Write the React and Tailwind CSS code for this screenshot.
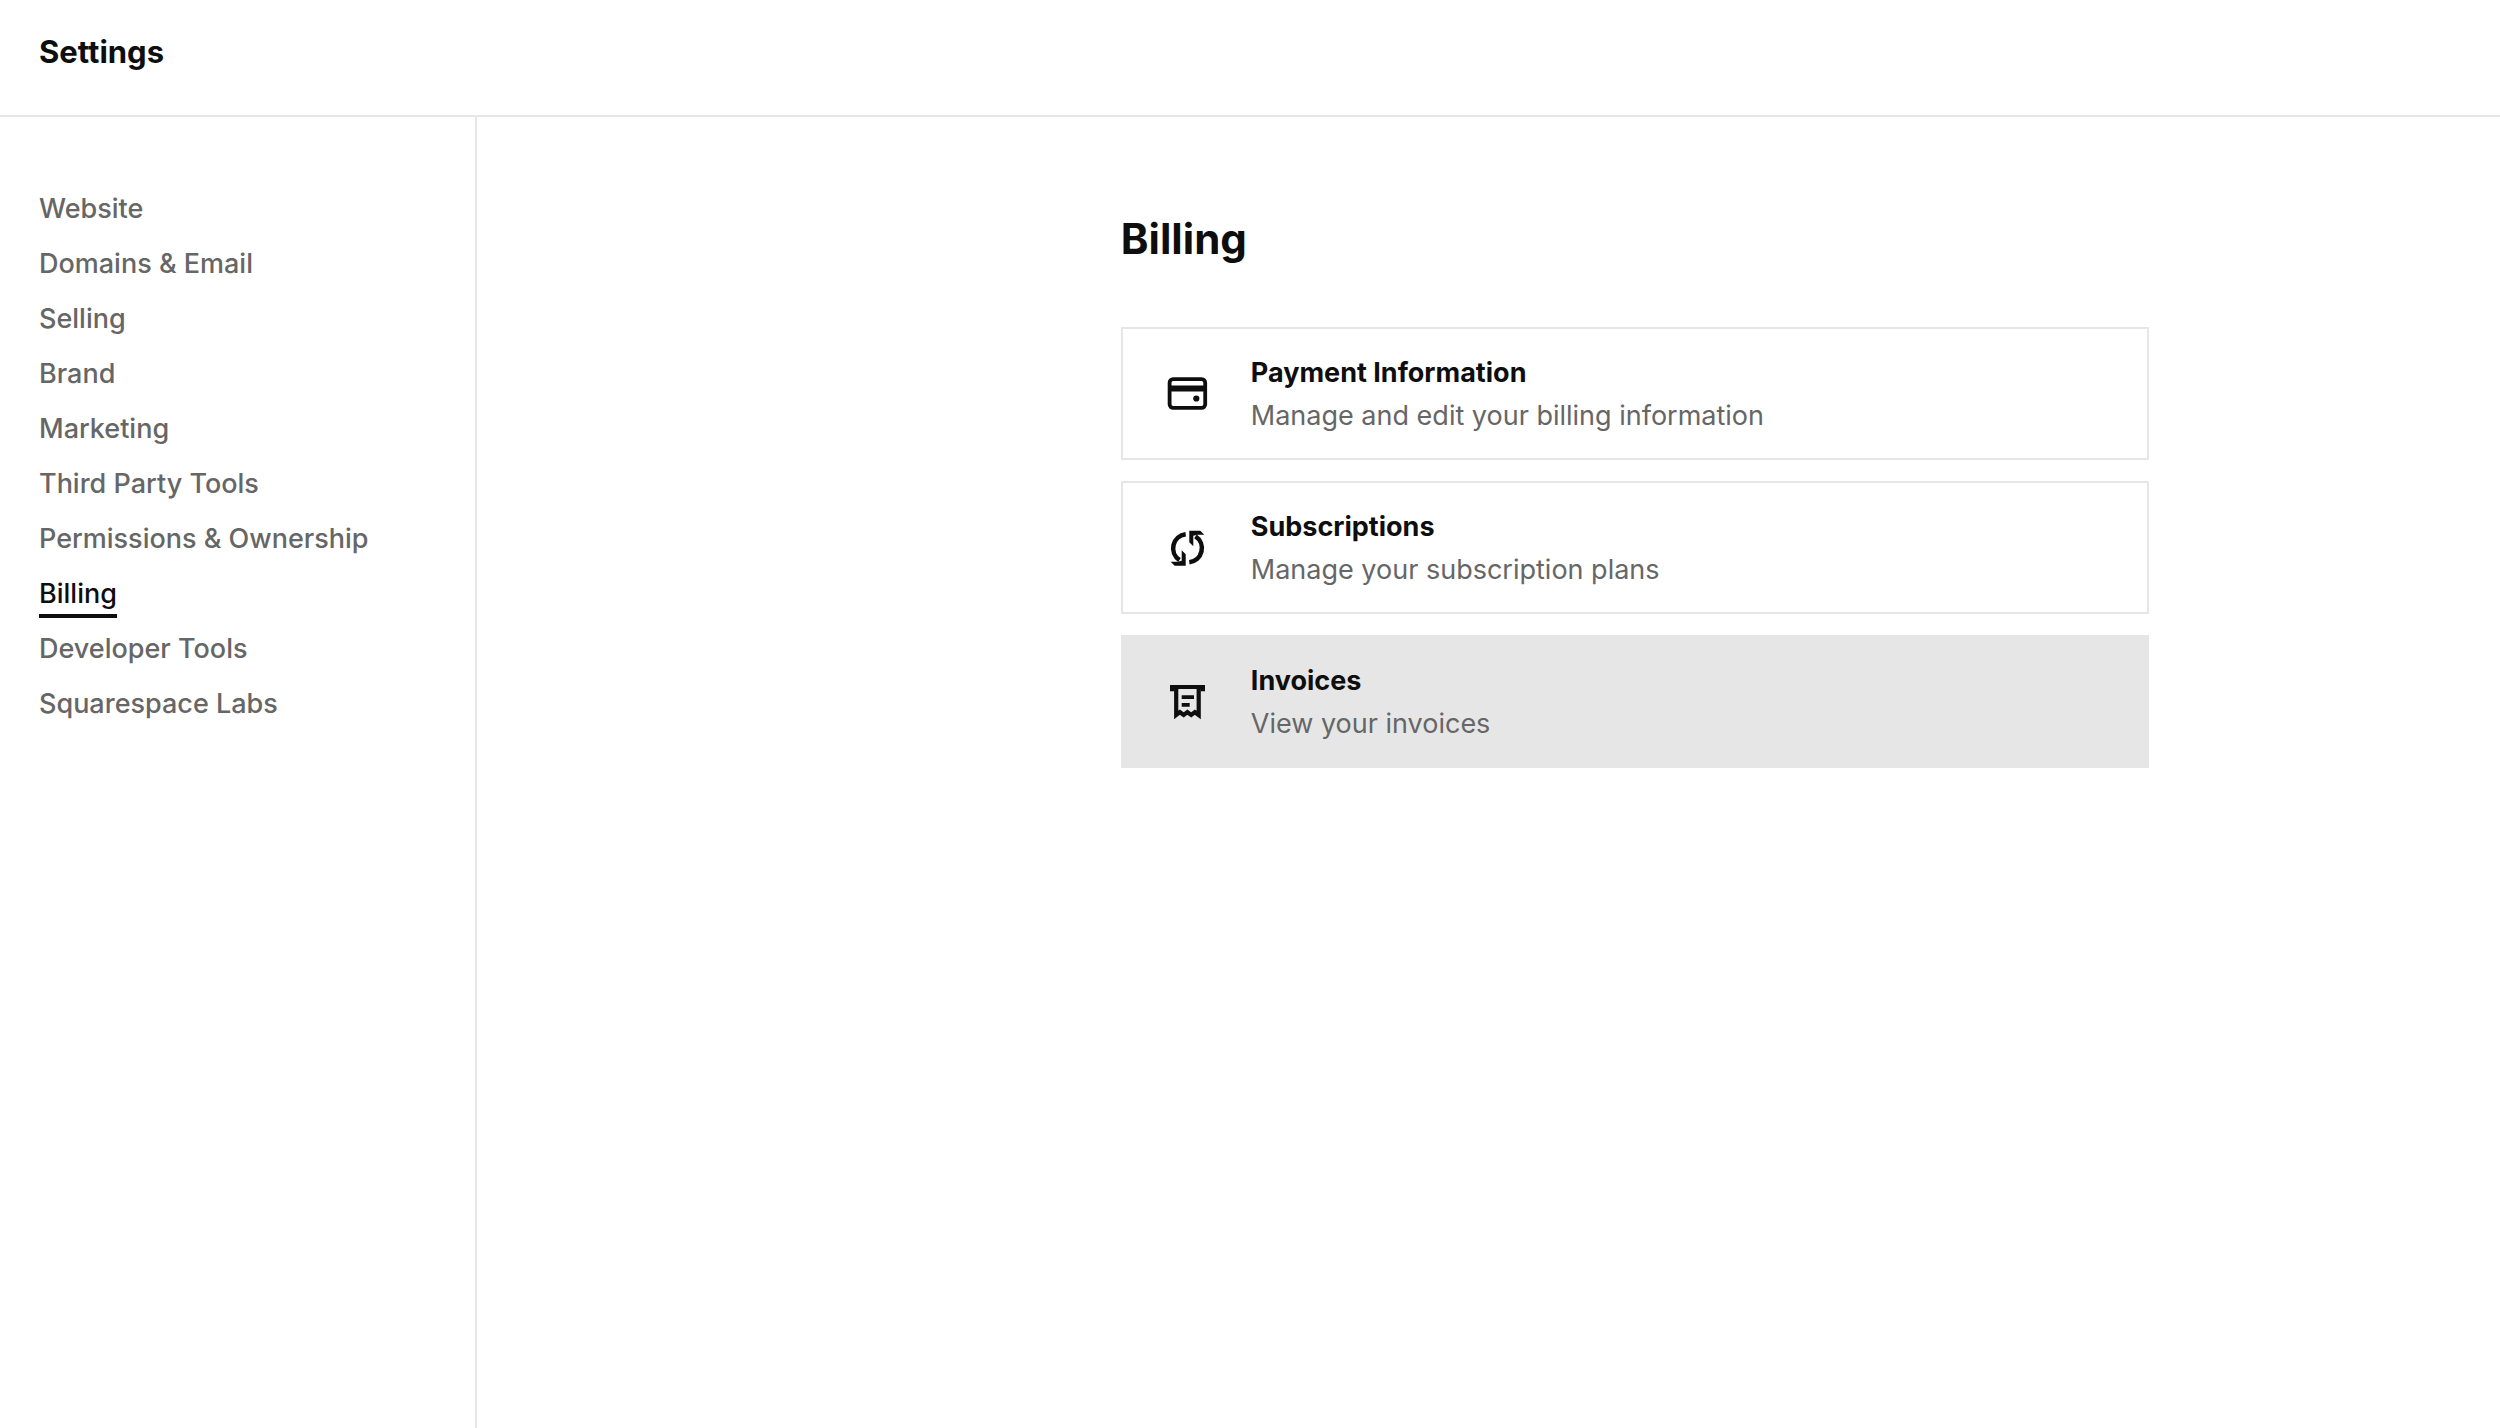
import React from 'react';

const navItems = [
  'Website',
  'Domains & Email',
  'Selling',
  'Brand',
  'Marketing',
  'Third Party Tools',
  'Permissions & Ownership',
  'Billing',
  'Developer Tools',
  'Squarespace Labs',
];

function CardIcon() {
  return (
    <svg className="size-11 shrink-0" viewBox="0 0 44 44" fill="none" aria-hidden="true">
      <rect x="4.6" y="7.1" width="35.6" height="28.8" rx="3.6" stroke="currentColor" strokeWidth="3.8" />
      <path d="M4 13.5h37v6H4z" fill="currentColor" />
      <circle cx="31.3" cy="26.5" r="3.1" fill="currentColor" />
    </svg>
  );
}

function RenewIcon() {
  return (
    <svg className="size-11 shrink-0" viewBox="0 0 44 44" fill="none" aria-hidden="true">
      <path d="M20.7 8.2A14.1 14.1 0 0 0 14.5 34" stroke="currentColor" strokeWidth="4.6" />
      <path d="M16.7 24.2l4 4v11.5h-11l-4-4h7l4-1z" fill="currentColor" />
      <path d="M24.3 36.2A14.1 14.1 0 0 0 30.5 10.4" stroke="currentColor" strokeWidth="4.6" />
      <path d="M28.3 20.2l-4-4V4.7h11l4 4h-7l-4 1z" fill="currentColor" />
    </svg>
  );
}

function InvoiceIcon() {
  return (
    <svg className="size-11 shrink-0" viewBox="0 0 44 44" fill="none" aria-hidden="true">
      <path d="M5 5h35v6.3h-4.5V9H9.3v2.3H5z" fill="currentColor" />
      <path
        d="M11.2 8v27l3.7-2.8 3.8 2.8 3.7-2.8 3.8 2.8 3.7-2.8 3.8 2.8V8"
        stroke="currentColor"
        strokeWidth="4.2"
      />
      <path d="M16.7 15.2H29v3.8H16.7zM16.7 23h8v3.8h-8z" fill="currentColor" />
    </svg>
  );
}

const cards = [
  {
    title: 'Payment Information',
    description: 'Manage and edit your billing information',
    icon: CardIcon,
  },
  {
    title: 'Subscriptions',
    description: 'Manage your subscription plans',
    icon: RenewIcon,
  },
  {
    title: 'Invoices',
    description: 'View your invoices',
    icon: InvoiceIcon,
    highlighted: true,
  },
];

function Sidebar({ active }) {
  return (
    <nav aria-label="Settings" className="w-[477px] shrink-0 border-r-2 border-[#e6e6e6] px-[39px] pt-[72px]">
      <ul>
        {navItems.map((item) => (
          <li key={item} className="flex h-[55px] items-start">
            <a
              href="#"
              aria-current={item === active ? 'page' : undefined}
              className={`border-b-4 text-[27px] leading-[40px] font-medium whitespace-nowrap ${
                item === active ? 'border-[#0e0e0e] text-[#0e0e0e]' : 'border-transparent text-[#666666]'
              }`}
            >
              {item}
            </a>
          </li>
        ))}
      </ul>
    </nav>
  );
}

function SettingsCard({ title, description, icon: Icon, highlighted }) {
  return (
    <a
      href="#"
      className={`flex h-[133px] items-center border-2 border-[#e6e6e6] pl-[42px] ${
        highlighted ? 'bg-[#e6e6e6]' : 'bg-white'
      }`}
    >
      <Icon />
      <div className="ml-[42px]">
        <h2 className="text-[27px] leading-[43px] font-bold">{title}</h2>
        <p className="text-[27px] leading-[43px] text-[#666666]">{description}</p>
      </div>
    </a>
  );
}

export default function App() {
  return (
    <div className="flex min-h-screen flex-col bg-white font-['Inter',sans-serif] text-[#0e0e0e]">
      <header className="border-b-2 border-[#e6e6e6] px-[39px] pt-[32px] pb-[43px]">
        <h1 className="text-[31px] leading-[40px] font-bold">Settings</h1>
      </header>

      <div className="flex flex-1">
        <Sidebar active="Billing" />

        <main className="grid flex-1 grid-cols-[11fr_minmax(0,1028px)_6fr] pt-[92px]">
          <section className="col-start-2">
            <h1 className="text-[42px] leading-[60px] font-bold">Billing</h1>
            <div className="mt-[58px] flex flex-col gap-[21px]">
              {cards.map((card) => (
                <SettingsCard key={card.title} {...card} />
              ))}
            </div>
          </section>
        </main>
      </div>
    </div>
  );
}
